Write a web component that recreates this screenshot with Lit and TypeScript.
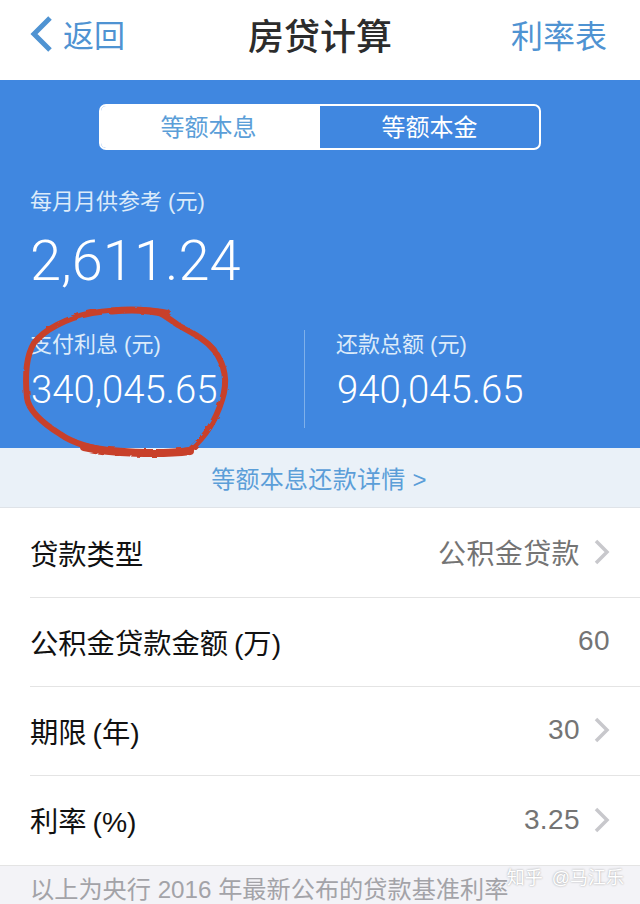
import { LitElement, html, css, svg } from 'lit';
import { customElement } from 'lit/decorators.js';

const rows = [
  { label: '贷款类型', value: '公积金贷款', arrow: true },
  { label: '公积金贷款金额 (万)', value: '60', arrow: false },
  { label: '期限 (年)', value: '30', arrow: true },
  { label: '利率 (%)', value: '3.25', arrow: true },
];

@customElement('app-root')
export class AppRoot extends LitElement {
  static styles = css`
    :host {
      display: block;
      position: relative;
      width: 640px;
      height: 904px;
      overflow: hidden;
      background: #fff;
      font-family: 'Liberation Sans', 'Noto Sans CJK SC', sans-serif;
    }

    /* Top navigation */
    .nav {
      height: 80px;
      display: grid;
      grid-template-columns: 1fr auto 1fr;
      align-items: center;
      padding: 0 33px 13px 30px;
      box-sizing: border-box;
    }
    .back {
      display: flex;
      align-items: center;
      gap: 9px;
      color: #4f93d2;
      font-size: 31px;
    }
    .nav-title {
      font-size: 36px;
      color: #2c2c2c;
      font-weight: 500;
      margin-left: 3px;
    }
    .nav-right {
      justify-self: end;
      color: #4f93d2;
      font-size: 32px;
    }

    /* Blue summary panel */
    .summary {
      height: 368px;
      background: #4087e0;
      color: #fff;
      padding: 24px 30px 0;
      box-sizing: border-box;
    }
    .tabs {
      width: 442px;
      height: 46px;
      margin: 0 auto;
      display: grid;
      grid-template-columns: 1fr 1fr;
      box-sizing: border-box;
      border: 2px solid #fff;
      border-radius: 7px;
      overflow: hidden;
      font-size: 24px;
    }
    .tab {
      display: flex;
      align-items: center;
      justify-content: center;
      box-sizing: border-box;
      padding-bottom: 3px;
    }
    .tab.active {
      background: #fff;
      color: #5b9ed8;
      padding-right: 4px;
    }
    .monthly-label {
      margin-top: 36px;
      font-size: 22px;
      line-height: 32px;
      color: #dcebfa;
    }
    .monthly {
      margin-top: 11px;
      font-family: Roboto, 'Liberation Sans', sans-serif;
      font-weight: 300;
      font-size: 56px;
      line-height: 64px;
    }
    .stats {
      margin-top: 37px;
      display: flex;
      height: 98px;
    }
    .stat {
      width: 274px;
    }
    .stat + .stat {
      width: auto;
      border-left: 1px solid #7fb0ea;
      padding-left: 31px;
    }
    .stat-label {
      font-size: 22px;
      line-height: 30px;
      color: #dcebfa;
    }
    .stat-value {
      margin-top: 9px;
      margin-left: 1px;
      font-family: Roboto, 'Liberation Sans', sans-serif;
      font-weight: 300;
      font-size: 38.3px;
      line-height: 42px;
    }

    /* Detail link */
    .detail {
      height: 60px;
      background: #eaf1f8;
      border-bottom: 1px solid #dfe3e8;
      box-sizing: border-box;
      display: flex;
      align-items: center;
      justify-content: center;
      padding-right: 2px;
      color: #5b9ed8;
      font-size: 24px;
      letter-spacing: 0.3px;
    }

    /* Form rows */
    .rows {
      padding-left: 30px;
      padding-top: 1px;
    }
    .row {
      height: 89px;
      box-sizing: border-box;
      border-bottom: 1px solid #e4e4e4;
      padding: 0 30px 2px 0;
      display: flex;
      align-items: center;
      justify-content: space-between;
      font-size: 28.3px;
      word-spacing: -2px;
      color: #111;
    }
    .row:last-child {
      border-bottom: none;
    }
    .value {
      display: flex;
      align-items: center;
      gap: 14px;
      color: #747474;
      font-size: 28px;
      letter-spacing: 0.4px;
    }

    /* Footer note */
    .note {
      height: 39px;
      background: #f3f3f7;
      border-top: 1px solid #e4e4e4;
      box-sizing: border-box;
      padding: 8px 0 0 30px;
      color: #a3a3a8;
      font-size: 24.2px;
      line-height: 32px;
      white-space: nowrap;
    }

    /* Overlays */
    .circle {
      position: absolute;
      left: 0;
      top: 0;
      pointer-events: none;
    }
    .watermark {
      position: absolute;
      right: 16px;
      top: 866px;
      color: #fff;
      font-size: 18px;
      line-height: 24px;
      word-spacing: 4px;
      text-shadow: 0 0 2px #999;
    }
  `;

  private chevron() {
    return html`<svg width="16" height="26" viewBox="0 0 16 26">
      <path d="M2 2l11 11L2 24" fill="none" stroke="#c8c8cc" stroke-width="3.5" />
    </svg>`;
  }

  render() {
    return html`
      <div class="nav">
        <div class="back">
          <svg width="24" height="36" viewBox="0 0 24 36">
            <path d="M20 2L4 18l16 16" fill="none" stroke="#4f93d2" stroke-width="5" />
          </svg>
          <span>返回</span>
        </div>
        <div class="nav-title">房贷计算</div>
        <div class="nav-right">利率表</div>
      </div>

      <div class="summary">
        <div class="tabs">
          <div class="tab active">等额本息</div>
          <div class="tab">等额本金</div>
        </div>
        <div class="monthly-label">每月月供参考 (元)</div>
        <div class="monthly">2,611.24</div>
        <div class="stats">
          <div class="stat">
            <div class="stat-label">支付利息 (元)</div>
            <div class="stat-value">340,045.65</div>
          </div>
          <div class="stat">
            <div class="stat-label">还款总额 (元)</div>
            <div class="stat-value">940,045.65</div>
          </div>
        </div>
      </div>

      <div class="detail">等额本息还款详情 &gt;</div>

      <div class="rows">
        ${rows.map(
          (r) => html`
            <div class="row">
              <span>${r.label}</span>
              <span class="value">${r.value}${r.arrow ? this.chevron() : ''}</span>
            </div>
          `,
        )}
      </div>

      <div class="note">以上为央行 2016 年最新公布的贷款基准利率</div>

      <svg class="circle" width="640" height="904" viewBox="0 0 640 904">
        ${svg`
          <defs>
            <filter id="rough" x="-10%" y="-10%" width="120%" height="120%">
              <feTurbulence type="fractalNoise" baseFrequency="0.12" numOctaves="2" seed="4" />
              <feDisplacementMap in="SourceGraphic" scale="3" />
            </filter>
          </defs>
          <g filter="url(#rough)" fill="none" stroke="#c8412b" stroke-linecap="round">
            <path
              stroke-width="6"
              d="M168 313C150 309 118 309 92 313C66 318 44 330 34 343C26 356 25 378 27 398C29 412 44 424 60 434C74 444 92 449 118 452C146 454 172 454 190 450C204 438 216 420 222 400C228 382 226 366 214 350C204 338 190 332 178 325C172 321 166 316 158 312"
            />
            <path stroke-width="8" d="M84 447C110 453 160 455 190 451" />
            <path stroke-width="7" d="M112 311C130 309 150 310 166 314" />
          </g>
        `}
      </svg>
      <div class="watermark">知乎 @马江乐</div>
    `;
  }
}
